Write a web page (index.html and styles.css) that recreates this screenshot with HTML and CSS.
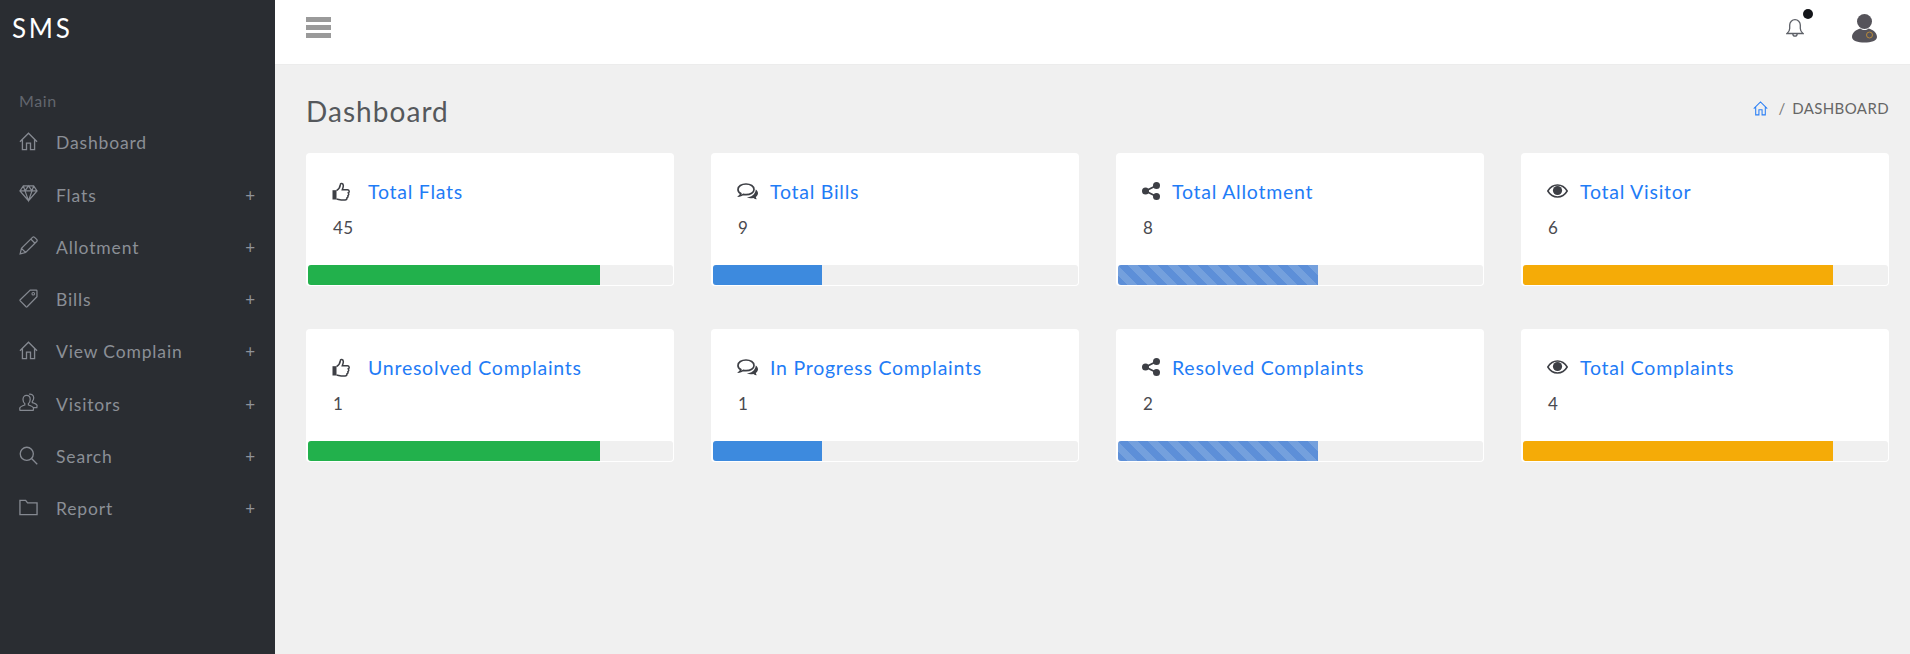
FILE: index.html
```html
<!DOCTYPE html>
<html lang="en">
<head>
<meta charset="utf-8">
<title>SMS Dashboard</title>
<link rel="stylesheet" href="styles.css">
</head>
<body>
<svg class="defs" width="0" height="0" aria-hidden="true">
  <defs>
    <symbol id="i-home" viewBox="0 0 20 20"><path d="M1 10.200 10 1.300l9 8.900M3.600 8.200v10.300h4.300v-6.800h4.200v6.800h4.300V8.200" fill="none" stroke="currentColor" stroke-width="1.400"/></symbol>
    <symbol id="i-gem" viewBox="0 0 20 18"><path d="M4.600 1h10.800L19 6.200 10 16.600 1 6.200zM1 6.200h18M6.300 6.200 10 16.600l3.700-10.400M4.600 1l1.700 5.200L10 1l3.700 5.200L15.400 1" fill="none" stroke="currentColor" stroke-width="1.300"/></symbol>
    <symbol id="i-pencil" viewBox="0 0 20 20"><path d="M1.200 18.800 2.600 13 14.200 1.400a1.600 1.600 0 0 1 2.200 0l2.200 2.200a1.600 1.600 0 0 1 0 2.200L7 17.400zM2.600 13 7 17.400M12.400 3.200l4.400 4.400" fill="none" stroke="currentColor" stroke-width="1.300"/></symbol>
    <symbol id="i-tag" viewBox="0 0 20 20"><path d="M11.800 1.200h6.400a.8.800 0 0 1 .7.700v6.300L8.600 18.700a.9.900 0 0 1-1.200 0L1.300 12.500a.9.900 0 0 1 0-1.200z" fill="none" stroke="currentColor" stroke-width="1.300"/><circle cx="15" cy="5" r="1.400" fill="none" stroke="currentColor" stroke-width="1.100"/></symbol>
    <symbol id="i-users" viewBox="0 0 20 20"><path d="M8 2.600c2.400 0 3.800 1.800 3.800 4.200 0 2-.8 3.400-1.900 4.400v1.400c2.600.8 5 1.700 5.300 3.200.2 1-.3 2.600-.3 2.600H1.100s-.5-1.500-.2-2.600c.3-1.500 2.700-2.400 5.200-3.200v-1.400C5 10.200 4.200 8.800 4.200 6.800c0-2.400 1.400-4.200 3.800-4.200zM10.500 1.300c2.300-.6 5 .8 5 3.700 0 1.700-.6 2.900-1.500 3.800v1.300c2.300.7 4.800 1.500 5 3 .1.900-.2 2.200-.2 2.200h-3.600" fill="none" stroke="currentColor" stroke-width="1.300"/></symbol>
    <symbol id="i-search" viewBox="0 0 20 20"><circle cx="8.200" cy="8.200" r="6.900" fill="none" stroke="currentColor" stroke-width="1.400"/><path d="m13.200 13.200 6 6" fill="none" stroke="currentColor" stroke-width="1.400"/></symbol>
    <symbol id="i-folder" viewBox="0 0 20 18"><path d="M1 1.500h6l2 2.600h10v12.400H1z" fill="none" stroke="currentColor" stroke-width="1.400"/></symbol>
    <symbol id="i-thumb" viewBox="0 0 18 19"><path d="M4.500 8.600c2.200-1.300 3.600-3.300 3.900-6.200.1-1.500 2.800-1.300 2.900 1 .1 1.700-.7 3.200-1 4.300h5.200c2 0 2.100 2.700.8 3.200.7.800.5 2.200-.4 2.700.3 1.100-.2 2-1 2.300.2 1.300-.6 2-1.800 2H9.100c-1.700 0-3-.8-4.600-.9" fill="none" stroke="currentColor" stroke-width="1.500"/><rect x=".5" y="8.200" width="4" height="9.300" fill="currentColor"/></symbol>
    <symbol id="i-bubbles" viewBox="0 0 21 17"><path d="M9 1C4.500 1 1 3.300 1 6.400c0 1.700 1.100 3.200 2.800 4.200-.2.900-.7 1.700-1.300 2.300 1.500-.2 2.800-.8 3.800-1.500.9.200 1.800.3 2.700.3 4.500 0 8-2.300 8-5.300S13.500 1 9 1z" fill="none" stroke="currentColor" stroke-width="1.700"/><path d="M18.800 6.500c1.400 1 2.200 2.300 2.200 3.800 0 1.500-.9 2.800-2.200 3.700.1.800.5 1.600 1.100 2.300-1.400-.2-2.600-.7-3.500-1.400-.9.200-1.700.3-2.600.3-1.500 0-2.900-.3-4-.8 4.200-.2 8.500-2.800 9-7.900z" fill="currentColor"/></symbol>
    <symbol id="i-share" viewBox="0 0 18 18"><path d="m14.500 3.500-11 5.500 11 5.500" fill="none" stroke="currentColor" stroke-width="1.800"/><circle cx="14.500" cy="3.500" r="3.500" fill="currentColor"/><circle cx="3.500" cy="9" r="3.500" fill="currentColor"/><circle cx="14.500" cy="14.500" r="3.500" fill="currentColor"/></symbol>
    <symbol id="i-eye" viewBox="0 0 21 14"><path d="M.8 7C3.200 3 6.500 1 10.500 1s7.300 2 9.700 6c-2.400 4-5.700 6-9.700 6S3.200 11 .8 7z" fill="none" stroke="currentColor" stroke-width="1.500"/><circle cx="10.500" cy="6.500" r="4.600" fill="currentColor"/></symbol>
    <symbol id="i-bell" viewBox="0 0 18 20"><path d="M1 15.500c1.800-1.400 2.700-2.900 2.700-5V7a5.300 5.300 0 0 1 10.600 0v3.500c0 2.100.9 3.600 2.700 5zM6.800 15.700c0 3.300 4.400 3.300 4.400 0" fill="none" stroke="currentColor" stroke-width="1.300"/></symbol>
    <symbol id="i-user" viewBox="0 0 25 30"><circle cx="12.500" cy="8.500" r="7.500" fill="currentColor"/><path d="M8.500 15.500c-4.500 1.300-8.500 4-8.500 8.500 0 3.800 6 5.500 12.500 5.500S25 27.800 25 24c0-4.500-4-7.200-8.500-8.500-2.400 2-5.600 2-8 0z" fill="currentColor"/><circle cx="17.500" cy="22" r="3" fill="none" stroke="#b98a3a" stroke-width="1"/></symbol>
  </defs>
</svg>

<div class="app">
  <aside class="sidebar">
    <div class="brand">SMS</div>
    <div class="nav-label">Main</div>
    <ul class="nav">
      <li class="nav-item"><svg class="nav-icon"><use href="#i-home"/></svg><span class="nav-text">Dashboard</span></li>
      <li class="nav-item"><svg class="nav-icon"><use href="#i-gem"/></svg><span class="nav-text">Flats</span><span class="nav-plus">+</span></li>
      <li class="nav-item"><svg class="nav-icon"><use href="#i-pencil"/></svg><span class="nav-text">Allotment</span><span class="nav-plus">+</span></li>
      <li class="nav-item"><svg class="nav-icon"><use href="#i-tag"/></svg><span class="nav-text">Bills</span><span class="nav-plus">+</span></li>
      <li class="nav-item"><svg class="nav-icon"><use href="#i-home"/></svg><span class="nav-text">View Complain</span><span class="nav-plus">+</span></li>
      <li class="nav-item"><svg class="nav-icon"><use href="#i-users"/></svg><span class="nav-text">Visitors</span><span class="nav-plus">+</span></li>
      <li class="nav-item"><svg class="nav-icon"><use href="#i-search"/></svg><span class="nav-text">Search</span><span class="nav-plus">+</span></li>
      <li class="nav-item"><svg class="nav-icon"><use href="#i-folder"/></svg><span class="nav-text">Report</span><span class="nav-plus">+</span></li>
    </ul>
  </aside>

  <div class="main">
    <header class="topbar">
      <div class="burger"><span></span><span></span><span></span></div>
      <div class="top-actions">
        <div class="bell"><svg class="bell-icon"><use href="#i-bell"/></svg><span class="bell-dot"></span></div>
        <svg class="avatar"><use href="#i-user"/></svg>
      </div>
    </header>

    <main class="content">
      <div class="page-head">
        <h1 class="page-title">Dashboard</h1>
        <div class="crumbs"><svg class="crumb-home"><use href="#i-home"/></svg><span class="crumb-sep">/</span><span class="crumb-text">DASHBOARD</span></div>
      </div>

      <div class="cards">
        <section class="card"><div class="card-head"><svg class="ci ci-thumb"><use href="#i-thumb"/></svg><a class="card-title">Total Flats</a></div><div class="card-num">45</div><div class="bar"><div class="fill fill-green"></div></div></section>
        <section class="card"><div class="card-head"><svg class="ci ci-bubbles"><use href="#i-bubbles"/></svg><a class="card-title">Total Bills</a></div><div class="card-num">9</div><div class="bar"><div class="fill fill-blue"></div></div></section>
        <section class="card"><div class="card-head"><svg class="ci ci-share"><use href="#i-share"/></svg><a class="card-title">Total Allotment</a></div><div class="card-num">8</div><div class="bar"><div class="fill fill-stripe"></div></div></section>
        <section class="card"><div class="card-head"><svg class="ci ci-eye"><use href="#i-eye"/></svg><a class="card-title">Total Visitor</a></div><div class="card-num">6</div><div class="bar"><div class="fill fill-amber"></div></div></section>
        <section class="card"><div class="card-head"><svg class="ci ci-thumb"><use href="#i-thumb"/></svg><a class="card-title">Unresolved Complaints</a></div><div class="card-num">1</div><div class="bar"><div class="fill fill-green"></div></div></section>
        <section class="card"><div class="card-head"><svg class="ci ci-bubbles"><use href="#i-bubbles"/></svg><a class="card-title">In Progress Complaints</a></div><div class="card-num">1</div><div class="bar"><div class="fill fill-blue"></div></div></section>
        <section class="card"><div class="card-head"><svg class="ci ci-share"><use href="#i-share"/></svg><a class="card-title">Resolved Complaints</a></div><div class="card-num">2</div><div class="bar"><div class="fill fill-stripe"></div></div></section>
        <section class="card"><div class="card-head"><svg class="ci ci-eye"><use href="#i-eye"/></svg><a class="card-title">Total Complaints</a></div><div class="card-num">4</div><div class="bar"><div class="fill fill-amber"></div></div></section>
      </div>
    </main>
  </div>
</div>
</body>
</html>
```
FILE: styles.css
```css
* { box-sizing: border-box; }
html, body { margin: 0; padding: 0; height: 100%; }
body { font-family: "Lato", "Open Sans", sans-serif; background: #f0f0f0; color: #444; overflow: hidden; }
.defs { position: absolute; }
.app { display: flex; height: 654px; }

.sidebar { width: 275px; flex: none; background: #2a2d32; color: #8b8f96; }
.brand { height: 64px; padding: 13px 0 0 12px; color: #fff; font-size: 26px; line-height: 30px; letter-spacing: 2.7px; }
.nav-label { padding: 26px 0 0 19px; height: 52.6px; font-size: 16px; line-height: 22px; letter-spacing: .6px; color: #62666e; }
.nav { list-style: none; margin: 0; padding: 0; }
.nav-item { display: flex; align-items: center; height: 52.3px; padding: 0 20px 0 19px; font-size: 17.5px; letter-spacing: .85px; }
.nav-icon { width: 19px; height: 19px; flex: none; margin-right: 18px; margin-top: -3px; color: #858991; }
.nav-text { flex: 1; }
.nav-plus { font-size: 17px; color: #8f9399; letter-spacing: 0; }

.main { flex: 1; min-width: 0; display: flex; flex-direction: column; }
.topbar { height: 64px; flex: none; background: #fff; display: flex; align-items: center; justify-content: space-between; padding: 0 33px 9px 31px; box-shadow: 0 1px 0 #ececec; }
.burger { display: flex; flex-direction: column; gap: 3px; width: 25px; }
.burger span { height: 5px; background: #9a9a9a; }
.top-actions { display: flex; align-items: center; gap: 48px; }
.bell { position: relative; width: 18px; height: 20px; }
.bell-icon { width: 18px; height: 20px; display: block; color: #5d6067; }
.bell-dot { position: absolute; left: 17px; top: -9px; width: 10px; height: 10px; border-radius: 50%; background: #14161a; }
.avatar { width: 25px; height: 30px; color: #55535a; }

.content { padding: 0 21px 0 31px; }
.page-head { display: flex; justify-content: space-between; align-items: center; height: 89px; }
.page-title { margin: 5px 0 0; font-size: 28px; font-weight: 400; color: #55585c; letter-spacing: 1.05px; }
.crumbs { display: flex; align-items: center; font-size: 15px; color: #666; padding-bottom: 1px; }
.crumb-home { width: 15px; height: 15px; color: #2a7ff5; }
.crumb-sep { margin: 0 7px 0 10px; color: #777; }
.crumb-text { letter-spacing: .4px; }

.cards { display: grid; grid-template-columns: repeat(4, 368px); column-gap: 37px; row-gap: 43px; }
.card { height: 133px; background: #fff; border-radius: 4px; padding: 25px 1px 1px 2px; display: flex; flex-direction: column; }
.card-head { display: flex; align-items: center; height: 26px; padding-left: 24px; }
.ci { flex: none; color: #3d3f45; }
.ci-thumb { width: 18px; height: 19px; margin-right: 18px; }
.ci-bubbles { width: 21px; height: 17px; margin-right: 12px; }
.ci-share { width: 18px; height: 18px; margin-right: 12px; }
.ci-eye { width: 21px; height: 14px; margin-right: 12px; }
.card-title { font-size: 19.5px; color: #1f7cf6; letter-spacing: .75px; }
.card-num { padding: 13px 0 0 25px; font-size: 17px; line-height: 22px; letter-spacing: .3px; color: #4a4a50; flex: 1; }
.bar { height: 20px; background: #f0f0f0; border-radius: 3px; overflow: hidden; }
.fill { height: 100%; }
.fill-green { width: 80%; background: #22b14c; }
.fill-blue { width: 29.9%; background: #3d8ade; }
.fill-amber { width: 85%; background: #f5ab07; }
.fill-stripe { width: 54.8%; background: repeating-linear-gradient(45deg, #5d8fd8 0 7.07px, #74a0dd 7.07px 14.14px); }
```
